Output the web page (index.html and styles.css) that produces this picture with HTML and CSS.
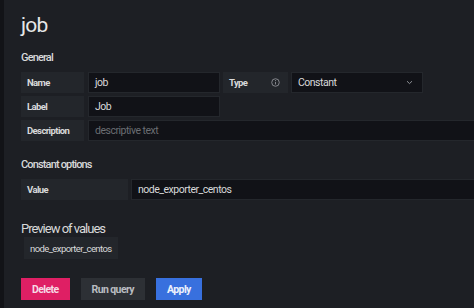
FILE: index.html
```
<!DOCTYPE html>
<html lang="en">
<head>
    <meta charset="UTF-8">
    <title>job</title>
    <link rel="stylesheet" href="styles.css">
</head>
<body>
    <div class="sidebar"></div>
    <div class="page">
        <h1 class="title">job</h1>

        <h3 class="section">General</h3>
        <div class="row">
            <span class="lbl w-name">Name</span>
            <span class="inp w-field">job</span>
            <span class="lbl w-type">Type
                <svg class="info" width="9" height="9" viewBox="0 0 10 10">
                    <circle cx="5" cy="5" r="4.2" fill="none" stroke="#8e9196" stroke-width="1"/>
                    <line x1="5" y1="4.4" x2="5" y2="7.2" stroke="#8e9196" stroke-width="1"/>
                    <circle cx="5" cy="2.9" r="0.6" fill="#8e9196"/>
                </svg>
            </span>
            <span class="inp w-field select">Constant
                <svg class="chev" width="7" height="5" viewBox="0 0 7 5">
                    <path d="M1 1.2 L3.5 3.6 L6 1.2" fill="none" stroke="#8e9196" stroke-width="1"/>
                </svg>
            </span>
        </div>
        <div class="row">
            <span class="lbl w-name">Label</span>
            <span class="inp w-field">Job</span>
        </div>
        <div class="row">
            <span class="lbl w-name">Description</span>
            <span class="inp grow placeholder">descriptive text</span>
        </div>

        <h3 class="section options">Constant options</h3>
        <div class="row">
            <span class="lbl w-value">Value</span>
            <span class="inp grow">node_exporter_centos</span>
        </div>

        <h3 class="preview">Preview of values</h3>
        <div class="chips">
            <span class="chip">node_exporter_centos</span>
        </div>

        <div class="actions">
            <button type="button" class="btn btn-delete">Delete</button>
            <button type="button" class="btn btn-run">Run query</button>
            <button type="button" class="btn btn-apply">Apply</button>
        </div>
    </div>
</body>
</html>
```

FILE: styles.css
```
html, body {
    height: 100%;
}

body {
    margin: 0;
    display: flex;
    background-color: #1d1f24;
    color: #d8d9da;
    font-family: Roboto, "Liberation Sans", sans-serif;
    overflow: hidden;
}

.sidebar {
    width: 4px;
    flex-shrink: 0;
    background-color: #121317;
}

.page {
    flex: 1;
    padding-left: 17px;
    min-width: 0;
}

.title {
    margin: 12px 0 0;
    font-size: 21px;
    font-weight: 400;
    line-height: 26px;
    letter-spacing: -0.7px;
    color: #e6e7e8;
}

.section {
    margin: 13px 0 8px;
    font-size: 11px;
    font-weight: 500;
    line-height: 13px;
    letter-spacing: -0.85px;
    color: #d8d9da;
}

.section.options {
    margin-top: 17px;
    margin-bottom: 8px;
}

.row {
    display: flex;
    gap: 3px;
    margin-bottom: 3px;
    height: 21px;
}

.lbl {
    display: flex;
    align-items: center;
    justify-content: space-between;
    box-sizing: border-box;
    padding: 0 7px 0 6px;
    background-color: #23262b;
    font-size: 9.5px;
    font-weight: 700;
    letter-spacing: -0.6px;
    color: #d8d9da;
}

.w-name { width: 63px; margin-right: 1px; }
.w-type { width: 65px; }
.w-value { width: 107px; }
.w-field { width: 132px; }

.inp {
    display: flex;
    align-items: center;
    box-sizing: border-box;
    padding: 0 6px;
    background-color: #111217;
    border: 1px solid #24272c;
    font-size: 10.5px;
    letter-spacing: -0.5px;
    color: #d8d9da;
}

.grow {
    flex: 1;
    margin-right: -2px;
}

.placeholder {
    color: #6b6e73;
}

.select {
    justify-content: space-between;
    padding-right: 9px;
}

.info {
    margin-right: 1px;
}

.preview {
    margin: 21px 0 0;
    font-size: 13px;
    font-weight: 400;
    line-height: 16px;
    letter-spacing: -1px;
    color: #d8d9da;
}

.chips {
    display: flex;
    padding-left: 3px;
}

.chip {
    display: inline-flex;
    align-items: center;
    height: 22px;
    padding: 0 6px;
    background-color: #23262b;
    font-size: 9.5px;
    letter-spacing: -0.6px;
    color: #d8d9da;
}

.actions {
    display: flex;
    gap: 11px;
    margin-top: 19px;
}

.btn {
    height: 22px;
    padding: 0 11px;
    border: none;
    font-family: Roboto, "Liberation Sans", sans-serif;
    font-size: 10.5px;
    font-weight: 700;
    letter-spacing: -0.6px;
    cursor: pointer;
}

.btn-delete {
    background-color: #df1f64;
    color: #f6dbe4;
}

.btn-run {
    background-color: #2d3035;
    color: #b9bcc0;
}

.btn-apply {
    background-color: #3870de;
    color: #eef2fb;
}
```
